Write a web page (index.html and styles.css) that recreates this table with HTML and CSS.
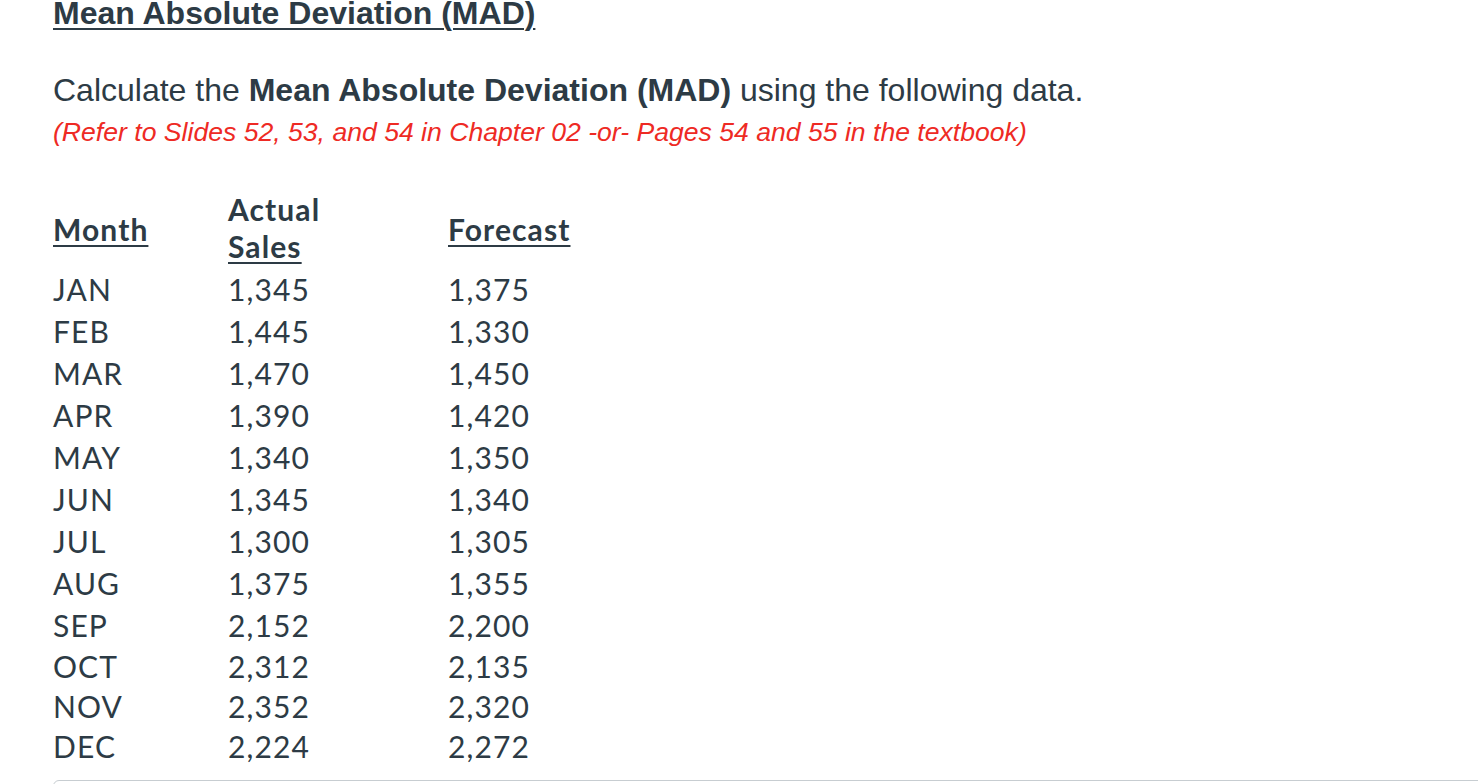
FILE: index.html
```html
<!DOCTYPE html>
<html>
<head>
<meta charset="utf-8">
<link rel="stylesheet" href="styles.css">
</head>
<body>
<div class="page">
  <h2 class="title">Mean Absolute Deviation (MAD)</h2>
  <p class="intro">Calculate the <strong>Mean Absolute Deviation (MAD)</strong> using the following data.</p>
  <p class="note">(Refer to Slides 52, 53, and 54 in Chapter 02 -or- Pages 54 and 55 in the textbook)</p>
  <table class="data">
    <thead>
      <tr><th class="c1 single"><u>Month</u></th><th class="c2">Actual<br><u>Sales</u></th><th class="c3 single"><u>Forecast</u></th></tr>
    </thead>
    <tbody>
      <tr><td>JAN</td><td>1,345</td><td>1,375</td></tr>
      <tr><td>FEB</td><td>1,445</td><td>1,330</td></tr>
      <tr><td>MAR</td><td>1,470</td><td>1,450</td></tr>
      <tr><td>APR</td><td>1,390</td><td>1,420</td></tr>
      <tr><td>MAY</td><td>1,340</td><td>1,350</td></tr>
      <tr><td>JUN</td><td>1,345</td><td>1,340</td></tr>
      <tr><td>JUL</td><td>1,300</td><td>1,305</td></tr>
      <tr><td>AUG</td><td>1,375</td><td>1,355</td></tr>
      <tr><td>SEP</td><td>2,152</td><td>2,200</td></tr>
      <tr class="tight"><td>OCT</td><td>2,312</td><td>2,135</td></tr>
      <tr class="tight"><td>NOV</td><td>2,352</td><td>2,320</td></tr>
      <tr class="tight"><td>DEC</td><td>2,224</td><td>2,272</td></tr>
    </tbody>
  </table>
  <div class="answer-box"></div>
</div>
</body>
</html>
```
FILE: styles.css
```css
html, body {
  margin: 0;
  padding: 0;
  background: #ffffff;
  overflow: hidden;
}
.page {
  padding-left: 53px;
  color: #2d3b45;
  font-family: "Liberation Sans", Arial, Helvetica, sans-serif;
}
.title {
  margin: 0;
  font-size: 32px;
  line-height: 27px;
  font-weight: bold;
  text-decoration: underline;
  text-decoration-thickness: 2px;
  text-underline-offset: 4px;
}
.intro {
  margin: 45px 0 0 0;
  font-size: 32px;
  line-height: 36px;
}
.intro strong {
  font-weight: bold;
}
.note {
  margin: 9px 0 0 0;
  font-size: 26.6px;
  line-height: 30px;
  font-style: italic;
  color: #ee2a24;
}
.data {
  margin-top: 44px;
  border-collapse: collapse;
  font-family: Lato, "Noto Sans", sans-serif;
  font-size: 30px;
  letter-spacing: 1.1px;
  color: #2d3b45;
}
.data th {
  text-align: left;
  font-weight: bold;
  line-height: 37px;
  padding: 0 0 3px 0;
  vertical-align: middle;
}
.data th.single {
  padding-top: 3px;
}
.data th u {
  text-decoration: underline;
  text-decoration-thickness: 2px;
  text-underline-offset: 4px;
}
.data td {
  padding: 0;
  height: 42px;
  line-height: 42px;
}
.data tr.tight td {
  height: 40px;
  line-height: 40px;
}
.data .c1 { width: 175px; }
.data .c2 { width: 220px; }
.answer-box {
  margin-top: 14px;
  margin-right: -10px;
  height: 40px;
  border: 1px solid #c7cdd1;
  border-radius: 6px;
}
```
